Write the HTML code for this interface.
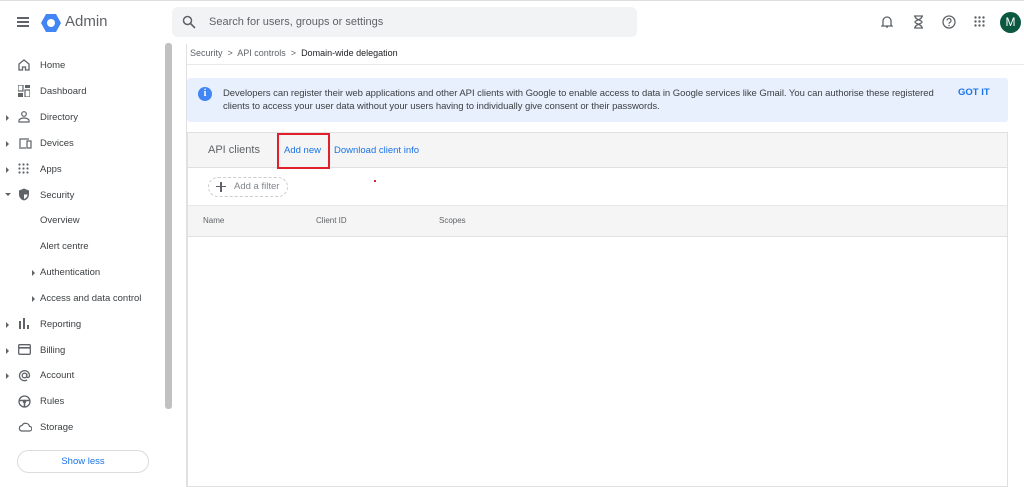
<!DOCTYPE html>
<html><head><meta charset="utf-8"><style>
*{box-sizing:border-box;margin:0;padding:0}
body{width:1024px;height:487px;overflow:hidden;background:#fff;font-family:"Liberation Sans",Arial,sans-serif;color:#202124;position:relative}
.abs{position:absolute}
.top{left:0;top:0;width:1024px;height:44px;border-top:1px solid #ddd}
.nav{font-size:9.5px;color:#3c4043}
.nav div{position:absolute;left:40px}
.ic{position:absolute;left:18px}
.ar{position:absolute;left:6px;width:0;height:0;border-top:3px solid transparent;border-bottom:3px solid transparent;border-left:3px solid #5f6368}
</style></head><body>
<div class="abs top"></div>
<div class="abs" style="left:17px;top:17px;width:12px;height:1.5px;background:#5f6368;box-shadow:0 4px 0 #5f6368,0 8px 0 #5f6368"></div>
<svg class="abs" style="left:41px;top:13px" width="20" height="20" viewBox="0 0 20 20"><polygon points="5,1 15,1 20,10 15,19 5,19 0,10" fill="#4285f4"/><circle cx="10" cy="10" r="4" fill="#fff"/></svg>
<div class="abs" style="left:65px;top:13px;font-size:15px;color:#5f6368">Admin</div>
<div class="abs" style="left:172px;top:7px;width:465px;height:30px;background:#f1f3f4;border-radius:6px"></div>
<svg class="abs" style="left:182px;top:15px" width="14" height="14" viewBox="0 0 14 14"><circle cx="5.5" cy="5.5" r="4" fill="none" stroke="#5f6368" stroke-width="1.5"/><line x1="8.5" y1="8.5" x2="13" y2="13" stroke="#5f6368" stroke-width="1.6"/></svg>
<div class="abs" style="left:209px;top:16px;font-size:11px;color:#5f6368">Search for users, groups or settings</div>
<svg class="abs" style="left:881px;top:15px" width="12" height="14" viewBox="0 0 12 14"><path d="M2 10V6a4 4 0 0 1 8 0v4l1 1H1z M5 12h2" fill="none" stroke="#5f6368" stroke-width="1.3"/></svg>
<svg class="abs" style="left:913px;top:15px" width="11" height="14" viewBox="0 0 11 14"><path d="M1 1h9M1 13h9M2 1c0 4 7 4 7 6s-7 2-7 6M9 1c0 4-7 4-7 6s7 2 7 6" fill="none" stroke="#5f6368" stroke-width="1.3"/></svg>
<svg class="abs" style="left:942px;top:15px" width="14" height="14" viewBox="0 0 14 14"><circle cx="7" cy="7" r="6" fill="none" stroke="#5f6368" stroke-width="1.3"/><path d="M5 5.5a2 2 0 1 1 2.5 2c-.5.2-.5.6-.5 1.2" fill="none" stroke="#5f6368" stroke-width="1.2"/><circle cx="7" cy="10.5" r=".8" fill="#5f6368"/></svg>
<svg class="abs" style="left:974px;top:16px" width="11" height="11" viewBox="0 0 11 11" fill="#5f6368"><circle cx="1.5" cy="1.5" r="1.2"/><circle cx="5.5" cy="1.5" r="1.2"/><circle cx="9.5" cy="1.5" r="1.2"/><circle cx="1.5" cy="5.5" r="1.2"/><circle cx="5.5" cy="5.5" r="1.2"/><circle cx="9.5" cy="5.5" r="1.2"/><circle cx="1.5" cy="9.5" r="1.2"/><circle cx="5.5" cy="9.5" r="1.2"/><circle cx="9.5" cy="9.5" r="1.2"/></svg>
<div class="abs" style="left:1000px;top:12px;width:21px;height:21px;border-radius:50%;background:#0b5740;color:#fff;font-size:12px;text-align:center;line-height:21px">M</div>
<div class="nav">
<div style="top:60px">Home</div><div style="top:86px">Dashboard</div><div style="top:112px">Directory</div><div style="top:138px">Devices</div><div style="top:164px">Apps</div><div style="top:190px">Security</div><div style="top:215px">Overview</div><div style="top:241px">Alert centre</div><div style="top:267px">Authentication</div><div style="top:293px">Access and data control</div><div style="top:319px">Reporting</div><div style="top:345px">Billing</div><div style="top:370px">Account</div><div style="top:396px">Rules</div><div style="top:422px">Storage</div>
</div>
<svg class="ic" style="top:59px" width="12" height="12" viewBox="0 0 12 12"><path d="M1 11V5l5-4 5 4v6H7.5V8h-3v3z" fill="none" stroke="#5f6368" stroke-width="1.3"/></svg>
<svg class="ic" style="top:85px" width="12" height="12" viewBox="0 0 12 12" fill="#5f6368"><rect x="0" y="0" width="5" height="6" fill="none" stroke="#5f6368" stroke-width="1.2"/><rect x="7" y="0" width="5" height="3"/><rect x="0" y="8" width="5" height="4"/><rect x="7" y="5" width="5" height="7" fill="none" stroke="#5f6368" stroke-width="1.2"/></svg>
<svg class="ic" style="top:111px" width="12" height="12" viewBox="0 0 12 12"><circle cx="6" cy="3" r="2.3" fill="none" stroke="#5f6368" stroke-width="1.2"/><path d="M1 11v-1.5c0-1.5 3-2.5 5-2.5s5 1 5 2.5V11z" fill="none" stroke="#5f6368" stroke-width="1.2"/></svg>
<svg class="ic" style="top:138px" width="14" height="11" viewBox="0 0 14 11"><path d="M1 10h7M2 9V1h9M9 3h4v7H9z" fill="none" stroke="#5f6368" stroke-width="1.2"/></svg>
<svg class="ic" style="top:163px" width="11" height="11" viewBox="0 0 11 11" fill="#5f6368"><circle cx="1.5" cy="1.5" r="1.1"/><circle cx="5.5" cy="1.5" r="1.1"/><circle cx="9.5" cy="1.5" r="1.1"/><circle cx="1.5" cy="5.5" r="1.1"/><circle cx="5.5" cy="5.5" r="1.1"/><circle cx="9.5" cy="5.5" r="1.1"/><circle cx="1.5" cy="9.5" r="1.1"/><circle cx="5.5" cy="9.5" r="1.1"/><circle cx="9.5" cy="9.5" r="1.1"/></svg>
<svg class="ic" style="top:188px" width="12" height="13" viewBox="0 0 12 13"><path d="M6 .5l5 2v4c0 3-2.2 5.3-5 6-2.8-.7-5-3-5-6v-4z" fill="#5f6368"/><path d="M6 2v9c2-.7 3.5-2.5 3.5-4.5V6.5H6z" fill="#fff"/></svg>
<svg class="ic" style="top:318px" width="12" height="11" viewBox="0 0 12 11" fill="#5f6368"><rect x="1" y="3" width="2" height="8"/><rect x="5" y="0" width="2" height="11"/><rect x="9" y="7" width="2" height="4"/></svg>
<svg class="ic" style="top:344px" width="13" height="11" viewBox="0 0 13 11"><rect x=".7" y=".7" width="11.6" height="9.6" rx="1" fill="none" stroke="#5f6368" stroke-width="1.3"/><rect x="1" y="3" width="11" height="1.6" fill="#5f6368"/></svg>
<svg class="ic" style="top:369px" width="13" height="13" viewBox="0 0 13 13"><circle cx="6.5" cy="6.5" r="2.3" fill="none" stroke="#5f6368" stroke-width="1.3"/><path d="M8.8 4.5v3c0 1.5 2.7 1.5 2.7-1A5 5 0 1 0 9 11" fill="none" stroke="#5f6368" stroke-width="1.3"/></svg>
<svg class="ic" style="top:395px" width="13" height="13" viewBox="0 0 13 13"><circle cx="6.5" cy="6.5" r="5.5" fill="none" stroke="#5f6368" stroke-width="1.3"/><path d="M1.5 5.5h10M6.5 7v5" stroke="#5f6368" stroke-width="1.6"/><circle cx="6.5" cy="6.5" r="1.7" fill="#5f6368"/></svg>
<svg class="ic" style="top:422px" width="14" height="10" viewBox="0 0 14 10"><path d="M3.5 9h8a2.3 2.3 0 0 0 0-4.6A4 4 0 0 0 4 3.5 2.8 2.8 0 0 0 3.5 9z" fill="none" stroke="#5f6368" stroke-width="1.2"/></svg>
<div class="ar" style="top:115px"></div><div class="ar" style="top:141px"></div><div class="ar" style="top:167px"></div>
<div class="abs" style="left:5px;top:193px;border-left:3px solid transparent;border-right:3px solid transparent;border-top:3px solid #5f6368"></div>
<div class="ar" style="left:32px;top:270px"></div><div class="ar" style="left:32px;top:296px"></div>
<div class="ar" style="top:322px"></div><div class="ar" style="top:348px"></div><div class="ar" style="top:373px"></div>
<div class="abs" style="left:17px;top:450px;width:132px;height:23px;border:1px solid #dadce0;border-radius:12px;text-align:center;font-size:9.5px;line-height:21px;color:#1a73e8">Show less</div>
<div class="abs" style="left:165px;top:43px;width:7px;height:366px;background:#c1c1c1;border-radius:3px"></div>
<div class="abs" style="left:186px;top:44px;width:1px;height:443px;background:#e0e0e0"></div>
<div class="abs" style="left:190px;top:48px;font-size:9px;color:#5f6368">Security &nbsp;&gt;&nbsp; API controls &nbsp;&gt;&nbsp; <span style="color:#202124">Domain-wide delegation</span></div>
<div class="abs" style="left:187px;top:64px;width:837px;height:1px;background:#e8e8e8"></div>
<div class="abs" style="left:187px;top:78px;width:821px;height:44px;background:#e8f0fe;border-radius:3px"></div>
<div class="abs" style="left:198px;top:87px;width:14px;height:14px;border-radius:50%;background:#4285f4;color:#fff;font-size:10px;font-weight:bold;text-align:center;line-height:14px;font-family:'Liberation Serif',serif">i</div>
<div class="abs" style="left:223px;top:87px;font-size:9.5px;line-height:13px;color:#3c4043;width:728px;letter-spacing:-0.05px">Developers can register their web applications and other API clients with Google to enable access to data in Google services like Gmail. You can authorise these registered clients to access your user data without your users having to individually give consent or their passwords.</div>
<div class="abs" style="left:958px;top:87px;font-size:9.5px;font-weight:bold;color:#1a73e8">GOT IT</div>
<div class="abs" style="left:187px;top:132px;width:821px;height:355px;border:1px solid #e0e0e0"></div>
<div class="abs" style="left:188px;top:133px;width:819px;height:35px;background:#f5f5f5;border-bottom:1px solid #e0e0e0"></div>
<div class="abs" style="left:208px;top:144px;font-size:11px;color:#5f6368">API clients</div>
<div class="abs" style="left:277px;top:133px;width:53px;height:36px;border:2px solid #e0202a"></div>
<div class="abs" style="left:284px;top:145px;font-size:9.5px;color:#1a73e8">Add new</div>
<div class="abs" style="left:334px;top:145px;font-size:9.5px;color:#1a73e8">Download client info</div>
<div class="abs" style="left:374px;top:180px;width:2px;height:2px;background:#e0202a"></div>
<div class="abs" style="left:208px;top:177px;width:80px;height:20px;border:1px dashed #ccc;border-radius:10px;font-size:9.5px;color:#80868b;line-height:18px;padding-left:25px">Add a filter</div>
<div class="abs" style="left:216px;top:186px;width:10px;height:1.4px;background:#5f6368"></div>
<div class="abs" style="left:220.3px;top:182px;width:1.4px;height:10px;background:#5f6368"></div>
<div class="abs" style="left:188px;top:205px;width:819px;height:32px;background:#f5f5f5;border-top:1px solid #e8e8e8;border-bottom:1px solid #e0e0e0"></div>
<div class="abs" style="left:203px;top:216px;font-size:8px;color:#5f6368">Name</div>
<div class="abs" style="left:316px;top:216px;font-size:8px;color:#5f6368">Client ID</div>
<div class="abs" style="left:439px;top:216px;font-size:8px;color:#5f6368">Scopes</div>
</body></html>
